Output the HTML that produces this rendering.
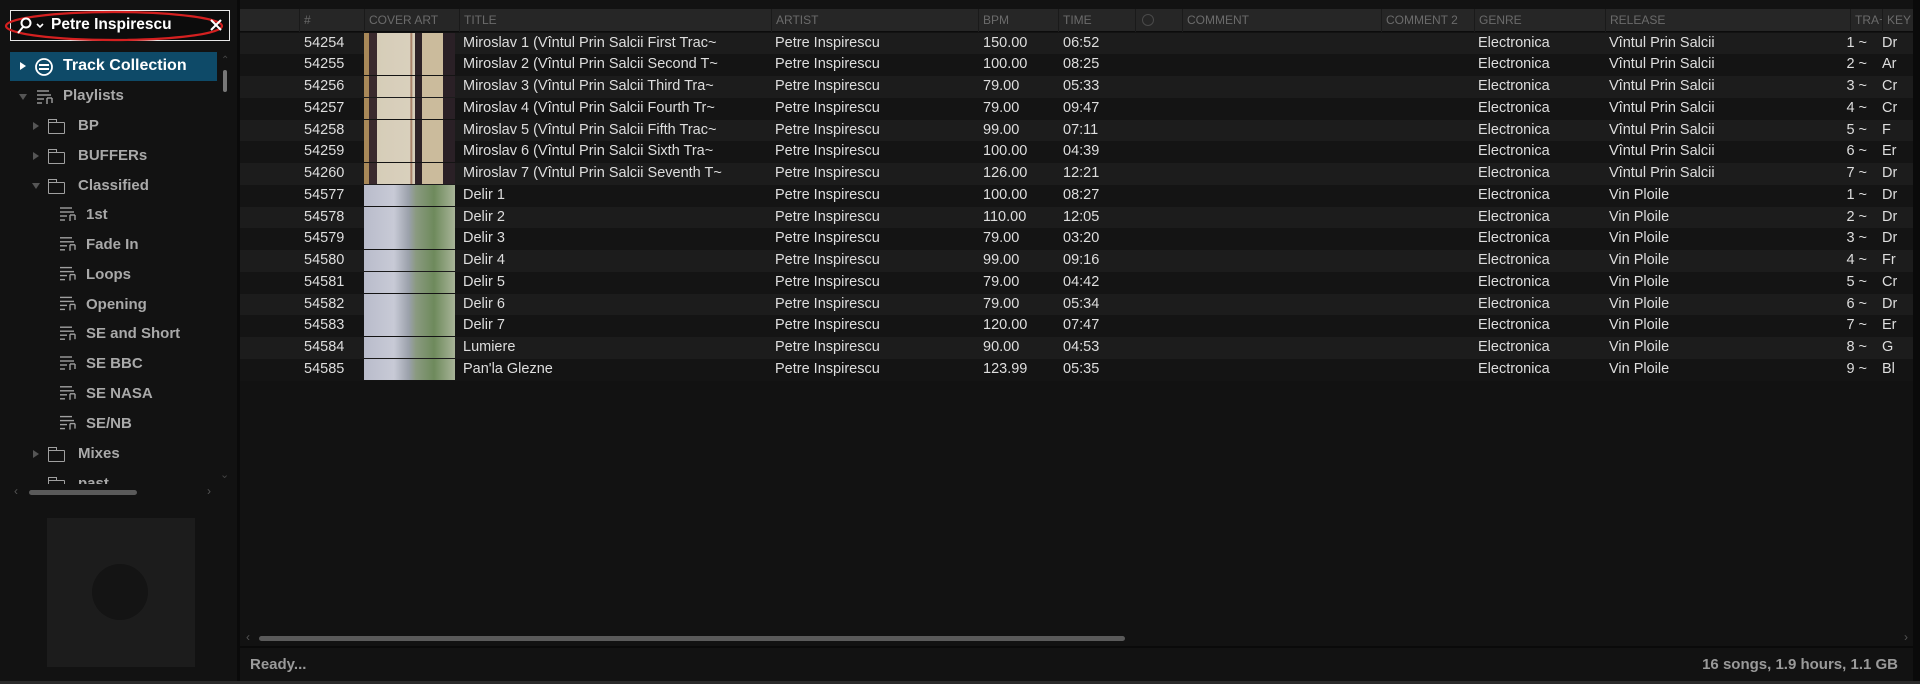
<!DOCTYPE html>
<html><head><meta charset="utf-8"><style>
*{margin:0;padding:0;box-sizing:border-box}
body{width:1920px;height:684px;background:#121212;overflow:hidden;position:relative;font-family:"Liberation Sans",sans-serif;color:#dedede}
.abs{position:absolute}
#side{left:0;top:0;width:237px;height:684px;background:#121212}
#div{left:237px;top:0;width:3px;height:684px;background:#0a0a0a}
.si{position:absolute;font-size:15px;color:#a9a9a9;white-space:nowrap;font-weight:bold}
.tri{position:absolute;width:0;height:0}
.tr{border-left:6px solid #555;border-top:4px solid transparent;border-bottom:4px solid transparent}
.td{border-top:6px solid #555;border-left:4px solid transparent;border-right:4px solid transparent}
.fold{position:absolute;width:17px;height:12px;border:1.5px solid #a0a0a0;border-radius:1px}
.fold:before{content:"";position:absolute;left:-1.5px;top:-4px;width:7px;height:3px;border:1.5px solid #a0a0a0;border-bottom:none}
#hdr{left:240px;top:9px;width:1673px;height:23px;background:#262626;border-bottom:1px solid #0c0c0c}
.h{position:absolute;top:0;height:23px;font-size:12px;color:#6b6b6b;line-height:23px;padding-left:4px;border-left:1px solid #1a1a1a;white-space:nowrap;overflow:hidden}
.row{position:absolute;left:240px;width:1673px;height:21.75px;font-size:14.5px;line-height:21.75px;white-space:nowrap}
.row span{position:absolute;top:0;overflow:hidden}
.o{background:#1c1c1c}.e{background:#141414}
.n{left:64px}.t{left:223px;width:305px}.a{left:535px}.b{left:743px}.ti{left:823px}.g{left:1238px}.r{left:1369px}.k{left:1642px}.tk{left:1580px;width:47px;text-align:right}
.cv{left:124px;width:91px;height:21px}
.m{background:linear-gradient(90deg,#a88858 0,#a88858 5px,#3a2a2e 5px,#3a2a2e 13px,#d6cdb8 13px,#d9d0bd 46px,#9a6a50 47px,#d6cdb8 49px,#d6cdb8 51px,#2e2226 51px,#2e2226 58px,#cbbb9c 58px,#cbbb9c 79px,#2a2026 79px,#2a2026 91px)}
.d{background:linear-gradient(90deg,#b9bccb 0,#c8cad6 30px,#9aa0aa 45px,#8a9a80 52px,#6e8a5c 70px,#a8b498 91px)}
</style></head><body>
<div id="side" class="abs"></div>
<div id="div" class="abs"></div>
<div class="abs" style="left:10px;top:10px;width:220px;height:31px;border:1.5px solid #e8e8e8;background:#0c0c0c"></div>
<svg class="abs" style="left:0;top:0" width="240" height="60"><ellipse cx="114" cy="26" rx="108" ry="14" fill="none" stroke="#d42020" stroke-width="2.2"/>
<circle cx="26" cy="23" r="4.5" fill="none" stroke="#fff" stroke-width="2"/><line x1="23" y1="27" x2="18" y2="33" stroke="#fff" stroke-width="2"/>
<polyline points="37,24 40,27 43,24" fill="none" stroke="#fff" stroke-width="1.6"/>
<line x1="211" y1="20" x2="221" y2="30" stroke="#fff" stroke-width="2"/><line x1="221" y1="20" x2="211" y2="30" stroke="#fff" stroke-width="2"/></svg>
<div class="si" style="left:51px;top:16px;color:#fff;font-size:15.5px">Petre Inspirescu</div>
<div class="abs" style="left:10px;top:52px;width:207px;height:29px;background:#0e4a68"></div>
<div class="tri tr" style="left:20px;top:62px;border-left-color:#fff"></div>
<svg class="abs" style="left:34px;top:57px" width="20" height="20"><circle cx="10" cy="10" r="8" fill="none" stroke="#fff" stroke-width="1.8"/><rect x="5" y="7" width="10" height="2" fill="#fff"/><rect x="5" y="11" width="10" height="2" fill="#fff"/></svg>
<div class="si" style="left:63px;top:57px;color:#fff;font-size:16px">Track Collection</div>
<div class="abs" style="left:223px;top:70px;width:4px;height:22px;background:#777;border-radius:2px"></div>
<div class="abs" style="left:221px;top:55px;color:#444;font-size:10px">&#8963;</div>
<div class="tri td" style="left:19px;top:94px"></div>
<svg class="abs" style="left:36px;top:88px" width="18" height="18"><g stroke="#a0a0a0" stroke-width="1.4" fill="none"><line x1="1" y1="3" x2="13" y2="3"/><line x1="1" y1="7" x2="15" y2="7"/><line x1="1" y1="11" x2="8" y2="11"/><line x1="1" y1="15" x2="6" y2="15"/><line x1="11" y1="10" x2="11" y2="16"/><line x1="11" y1="10" x2="16" y2="10"/><line x1="16" y1="10" x2="16" y2="15"/></g></svg>
<div class="si" style="left:63px;top:87px">Playlists</div>
<div class="tri tr" style="left:33px;top:122px"></div><div class="fold" style="left:48px;top:122px"></div><div class="si" style="left:78px;top:117px">BP</div>
<div class="tri tr" style="left:33px;top:152px"></div><div class="fold" style="left:48px;top:152px"></div><div class="si" style="left:78px;top:147px">BUFFERs</div>
<div class="tri td" style="left:32px;top:183px"></div><div class="fold" style="left:48px;top:182px"></div><div class="si" style="left:78px;top:177px">Classified</div>
<svg class="abs" style="left:0;top:0;pointer-events:none" width="80" height="440"><g stroke="#a0a0a0" stroke-width="1.4" fill="none">
<g id="pl"><line x1="60" y1="208" x2="72" y2="208"/><line x1="60" y1="212" x2="74" y2="212"/><line x1="60" y1="216" x2="67" y2="216"/><line x1="60" y1="220" x2="65" y2="220"/><line x1="70" y1="215" x2="70" y2="221"/><line x1="70" y1="215" x2="75" y2="215"/><line x1="75" y1="215" x2="75" y2="220"/></g>
<use href="#pl" y="29.8"/><use href="#pl" y="59.6"/><use href="#pl" y="89.4"/><use href="#pl" y="119.2"/><use href="#pl" y="149"/><use href="#pl" y="178.8"/><use href="#pl" y="208.6"/></g></svg>
<div class="si" style="left:86px;top:206px">1st</div>
<div class="si" style="left:86px;top:236px">Fade In</div>
<div class="si" style="left:86px;top:266px">Loops</div>
<div class="si" style="left:86px;top:296px">Opening</div>
<div class="si" style="left:86px;top:325px">SE and Short</div>
<div class="si" style="left:86px;top:355px">SE BBC</div>
<div class="si" style="left:86px;top:385px">SE NASA</div>
<div class="si" style="left:86px;top:415px">SE/NB</div>
<div class="tri tr" style="left:33px;top:450px"></div><div class="fold" style="left:48px;top:450px"></div><div class="si" style="left:78px;top:445px">Mixes</div>
<div class="abs" style="left:0;top:476px;width:215px;height:8px;overflow:hidden"><div class="fold" style="left:48px;top:4px"></div><div class="si" style="left:78px;top:-1px">past</div></div>
<div class="abs" style="left:220px;top:468px;color:#444;font-size:11px">&#8964;</div>
<div class="abs" style="left:14px;top:484px;color:#555;font-size:12px">&lsaquo;</div>
<div class="abs" style="left:207px;top:484px;color:#555;font-size:12px">&rsaquo;</div>
<div class="abs" style="left:29px;top:490px;width:108px;height:5px;background:#5a5a5a;border-radius:3px"></div>
<div class="abs" style="left:47px;top:518px;width:148px;height:149px;background:#1c1c1c"></div>
<div class="abs" style="left:92px;top:564px;width:56px;height:56px;border-radius:50%;background:#141414"></div>

<div id="hdr" class="abs">
<div class="h" style="left:0;width:59px;border-left:none"></div>
<div class="h" style="left:59px;width:65px">#</div>
<div class="h" style="left:124px;width:95px">COVER ART</div>
<div class="h" style="left:219px;width:312px">TITLE</div>
<div class="h" style="left:531px;width:207px">ARTIST</div>
<div class="h" style="left:738px;width:80px">BPM</div>
<div class="h" style="left:818px;width:77px">TIME</div>
<div class="h" style="left:895px;width:47px"><span style="display:inline-block;width:12px;height:12px;border:1px solid #4a4a4a;border-radius:50%;margin-top:5px;margin-left:2px"></span></div>
<div class="h" style="left:942px;width:199px">COMMENT</div>
<div class="h" style="left:1141px;width:93px">COMMENT 2</div>
<div class="h" style="left:1234px;width:131px">GENRE</div>
<div class="h" style="left:1365px;width:245px">RELEASE</div>
<div class="h" style="left:1610px;width:32px">TRA~</div>
<div class="h" style="left:1642px;width:31px">KEY</div>
</div>

<div class="row o" style="top:32.5px"><span class="n">54254</span><span class="cv m"></span><span class="t">Miroslav 1 (Vîntul Prin Salcii First Trac~</span><span class="a">Petre Inspirescu</span><span class="b">150.00</span><span class="ti">06:52</span><span class="g">Electronica</span><span class="r">Vîntul Prin Salcii</span><span class="tk">1 ~</span><span class="k">Dr</span></div>
<div class="row e" style="top:54.25px"><span class="n">54255</span><span class="cv m"></span><span class="t">Miroslav 2 (Vîntul Prin Salcii Second T~</span><span class="a">Petre Inspirescu</span><span class="b">100.00</span><span class="ti">08:25</span><span class="g">Electronica</span><span class="r">Vîntul Prin Salcii</span><span class="tk">2 ~</span><span class="k">Ar</span></div>
<div class="row o" style="top:76px"><span class="n">54256</span><span class="cv m"></span><span class="t">Miroslav 3 (Vîntul Prin Salcii Third Tra~</span><span class="a">Petre Inspirescu</span><span class="b">79.00</span><span class="ti">05:33</span><span class="g">Electronica</span><span class="r">Vîntul Prin Salcii</span><span class="tk">3 ~</span><span class="k">Cr</span></div>
<div class="row e" style="top:97.75px"><span class="n">54257</span><span class="cv m"></span><span class="t">Miroslav 4 (Vîntul Prin Salcii Fourth Tr~</span><span class="a">Petre Inspirescu</span><span class="b">79.00</span><span class="ti">09:47</span><span class="g">Electronica</span><span class="r">Vîntul Prin Salcii</span><span class="tk">4 ~</span><span class="k">Cr</span></div>
<div class="row o" style="top:119.5px"><span class="n">54258</span><span class="cv m"></span><span class="t">Miroslav 5 (Vîntul Prin Salcii Fifth Trac~</span><span class="a">Petre Inspirescu</span><span class="b">99.00</span><span class="ti">07:11</span><span class="g">Electronica</span><span class="r">Vîntul Prin Salcii</span><span class="tk">5 ~</span><span class="k">F</span></div>
<div class="row e" style="top:141.25px"><span class="n">54259</span><span class="cv m"></span><span class="t">Miroslav 6 (Vîntul Prin Salcii Sixth Tra~</span><span class="a">Petre Inspirescu</span><span class="b">100.00</span><span class="ti">04:39</span><span class="g">Electronica</span><span class="r">Vîntul Prin Salcii</span><span class="tk">6 ~</span><span class="k">Er</span></div>
<div class="row o" style="top:163px"><span class="n">54260</span><span class="cv m"></span><span class="t">Miroslav 7 (Vîntul Prin Salcii Seventh T~</span><span class="a">Petre Inspirescu</span><span class="b">126.00</span><span class="ti">12:21</span><span class="g">Electronica</span><span class="r">Vîntul Prin Salcii</span><span class="tk">7 ~</span><span class="k">Dr</span></div>
<div class="row e" style="top:184.75px"><span class="n">54577</span><span class="cv d"></span><span class="t">Delir 1</span><span class="a">Petre Inspirescu</span><span class="b">100.00</span><span class="ti">08:27</span><span class="g">Electronica</span><span class="r">Vin Ploile</span><span class="tk">1 ~</span><span class="k">Dr</span></div>
<div class="row o" style="top:206.5px"><span class="n">54578</span><span class="cv d"></span><span class="t">Delir 2</span><span class="a">Petre Inspirescu</span><span class="b">110.00</span><span class="ti">12:05</span><span class="g">Electronica</span><span class="r">Vin Ploile</span><span class="tk">2 ~</span><span class="k">Dr</span></div>
<div class="row e" style="top:228.25px"><span class="n">54579</span><span class="cv d"></span><span class="t">Delir 3</span><span class="a">Petre Inspirescu</span><span class="b">79.00</span><span class="ti">03:20</span><span class="g">Electronica</span><span class="r">Vin Ploile</span><span class="tk">3 ~</span><span class="k">Dr</span></div>
<div class="row o" style="top:250px"><span class="n">54580</span><span class="cv d"></span><span class="t">Delir 4</span><span class="a">Petre Inspirescu</span><span class="b">99.00</span><span class="ti">09:16</span><span class="g">Electronica</span><span class="r">Vin Ploile</span><span class="tk">4 ~</span><span class="k">Fr</span></div>
<div class="row e" style="top:271.75px"><span class="n">54581</span><span class="cv d"></span><span class="t">Delir 5</span><span class="a">Petre Inspirescu</span><span class="b">79.00</span><span class="ti">04:42</span><span class="g">Electronica</span><span class="r">Vin Ploile</span><span class="tk">5 ~</span><span class="k">Cr</span></div>
<div class="row o" style="top:293.5px"><span class="n">54582</span><span class="cv d"></span><span class="t">Delir 6</span><span class="a">Petre Inspirescu</span><span class="b">79.00</span><span class="ti">05:34</span><span class="g">Electronica</span><span class="r">Vin Ploile</span><span class="tk">6 ~</span><span class="k">Dr</span></div>
<div class="row e" style="top:315.25px"><span class="n">54583</span><span class="cv d"></span><span class="t">Delir 7</span><span class="a">Petre Inspirescu</span><span class="b">120.00</span><span class="ti">07:47</span><span class="g">Electronica</span><span class="r">Vin Ploile</span><span class="tk">7 ~</span><span class="k">Er</span></div>
<div class="row o" style="top:337px"><span class="n">54584</span><span class="cv d"></span><span class="t">Lumiere</span><span class="a">Petre Inspirescu</span><span class="b">90.00</span><span class="ti">04:53</span><span class="g">Electronica</span><span class="r">Vin Ploile</span><span class="tk">8 ~</span><span class="k">G</span></div>
<div class="row e" style="top:358.75px"><span class="n">54585</span><span class="cv d"></span><span class="t">Pan'la Glezne</span><span class="a">Petre Inspirescu</span><span class="b">123.99</span><span class="ti">05:35</span><span class="g">Electronica</span><span class="r">Vin Ploile</span><span class="tk">9 ~</span><span class="k">Bl</span></div>

<div class="abs" style="left:1913px;top:0;width:7px;height:684px;background:#0a0a0a"></div>
<div class="abs" style="left:246px;top:630px;color:#555;font-size:12px">&lsaquo;</div>
<div class="abs" style="left:1904px;top:630px;color:#555;font-size:12px">&rsaquo;</div>
<div class="abs" style="left:259px;top:636px;width:866px;height:5px;background:#5a5a5a;border-radius:3px"></div>
<div class="abs" style="left:240px;top:646px;width:1673px;height:2px;background:#0a0a0a"></div>
<div class="abs" style="left:250px;top:656px;font-size:15px;color:#9a9a9a;font-weight:bold">Ready...</div>
<div class="abs" style="left:1560px;top:656px;width:338px;text-align:right;font-size:15px;color:#9a9a9a;font-weight:bold">16 songs, 1.9 hours, 1.1 GB</div>
<div class="abs" style="left:0;top:681px;width:1920px;height:3px;background:#2a2a2a"></div>
</body></html>
